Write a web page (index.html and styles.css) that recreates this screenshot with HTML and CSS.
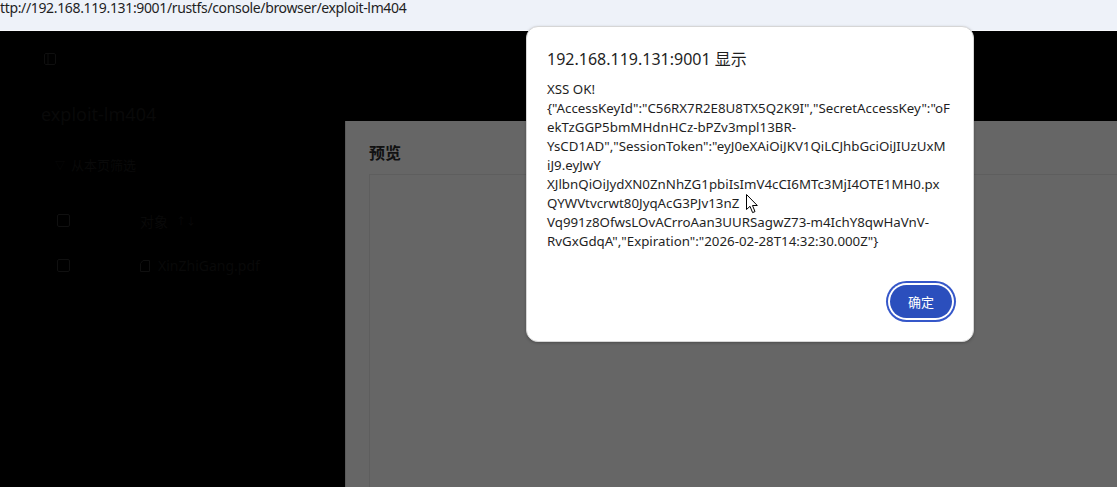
FILE: index.html
```html
<!DOCTYPE html>
<html lang="zh-CN">
<head>
<meta charset="utf-8">
<title>exploit-lm404</title>
<link rel="stylesheet" href="styles.css">
</head>
<body>
<div class="urlbar">ttp://192.168.119.131:9001/rustfs/console/browser/exploit-lm404</div>
<div class="page">
  <div class="side">
    <svg class="side-icon" width="12" height="12" viewBox="0 0 12 12"><rect x="0.5" y="0.5" width="11" height="11" rx="1.5" fill="none" stroke="#0f0f0f"/><line x1="4" y1="1" x2="4" y2="11" stroke="#0f0f0f"/></svg>
    <div class="bucket">exploit-lm404</div>
    <div class="filter"><span class="funnel">▽</span>从本页筛选</div>
    <div class="row head"><span class="cb"></span><span class="name">对象 <span class="sort">↑↓</span></span></div>
    <div class="row"><span class="cb"></span><span class="name"><svg width="10" height="12" viewBox="0 0 10 12"><path d="M3 0.5h6.5v11h-9v-8z" fill="none" stroke="#0f0f0f"/></svg>XinZhiGang.pdf</span></div>
  </div>
  <div class="main">
    <div class="preview">
      <div class="preview-title">预览</div>
      <div class="preview-box"></div>
    </div>
  </div>
</div>

<div class="dialog">
  <div class="dialog-title">192.168.119.131:9001 显示</div>
  <div class="dialog-body">
    <div>XSS OK!</div>
    <div>{"AccessKeyId":"C56RX7R2E8U8TX5Q2K9I","SecretAccessKey":"oF</div>
    <div>ekTzGGP5bmMHdnHCz-bPZv3mpl13BR-</div>
    <div>YsCD1AD","SessionToken":"eyJ0eXAiOiJKV1QiLCJhbGciOiJIUzUxM</div>
    <div>iJ9.eyJwY</div>
    <div>XJlbnQiOiJydXN0ZnNhZG1pbiIsImV4cCI6MTc3MjI4OTE1MH0.px</div>
    <div>QYWVtvcrwt80JyqAcG3PJv13nZ</div>
    <div>Vq991z8OfwsLOvACrroAan3UURSagwZ73-m4IchY8qwHaVnV-</div>
    <div>RvGxGdqA","Expiration":"2026-02-28T14:32:30.000Z"}</div>
  </div>
  <div class="dialog-actions"><button class="ok">确定</button></div>
</div>

<svg class="cursor" width="13" height="20" viewBox="0 0 13 20"><path d="M0.5 0.5 L0.5 15.5 L4 12.3 L6.6 18.6 L9 17.6 L6.5 11.5 L11.3 11.5 Z" fill="#fff" stroke="#000" stroke-width="1" stroke-linejoin="round"/></svg>
</body>
</html>
```
FILE: styles.css
```css
* { box-sizing: border-box; }
html, body { margin: 0; padding: 0; }
body {
  width: 1117px;
  height: 487px;
  overflow: hidden;
  background: #000;
  font-family: "Noto Sans", "Noto Sans CJK SC", sans-serif;
}
.urlbar {
  height: 31px;
  background: #eef2f9;
  border-bottom: 1px solid #f8f9fc;
  color: #1f1f1f;
  font-size: 14px;
  line-height: 16px;
  white-space: nowrap;
  letter-spacing: -0.35px;
}
.page {
  display: flex;
  height: 456px;
  background: #000;
}
.side {
  width: 345px;
  flex: none;
  color: #090909;
  display: flex;
  flex-direction: column;
}
.side-icon { margin: 22px 0 0 44px; display: block; }
.bucket {
  margin: 38px 0 0 41px;
  font-size: 18px;
  line-height: 22px;
}
.filter {
  margin: 31px 0 0 55px;
  font-size: 13px;
  line-height: 18px;
  display: flex;
  gap: 6px;
  align-items: center;
}
.funnel { font-size: 10px; }
.row {
  display: flex;
  align-items: center;
  margin-left: 57px;
  height: 45px;
}
.row.head { margin-top: 24px; }
.cb {
  width: 13px;
  height: 13px;
  border: 1px solid #101010;
  border-radius: 2px;
}
.name {
  margin-left: 70px;
  font-size: 14px;
  display: flex;
  align-items: center;
  gap: 8px;
}
.sort { font-size: 10px; }
.main {
  flex: 1;
  padding-top: 90px;
  display: flex;
}
.preview {
  flex: 1;
  background: #666;
  border-left: 1px solid #5a5a5a;
  padding: 20px 0 0 23px;
  display: flex;
  flex-direction: column;
}
.preview-title {
  color: #111;
  font-weight: 700;
  font-size: 16px;
  line-height: 22px;
  font-family: "Noto Sans CJK SC", sans-serif;
}
.preview-box {
  flex: 1;
  margin-top: 11px;
  border-top: 1px solid #5e5e5e;
  border-left: 1px solid #5e5e5e;
}
.dialog {
  position: absolute;
  left: 526px;
  top: 26px;
  width: 448px;
  height: 316px;
  background: #fff;
  border: 1px solid #d6d6d6;
  border-radius: 12px;
  box-shadow: 0 1px 3px rgba(0,0,0,0.25);
  padding: 20px 17px 0 20px;
  display: flex;
  flex-direction: column;
  color: #1f1f1f;
}
.dialog-title {
  font-size: 16px;
  line-height: 24px;
  white-space: nowrap;
}
.dialog-body {
  margin-top: 9px;
  font-size: 13.3px;
  line-height: 19px;
  white-space: nowrap;
}
.dialog-actions {
  margin-top: auto;
  margin-bottom: 19px;
  display: flex;
  justify-content: flex-end;
}
.ok {
  width: 62px;
  height: 33px;
  margin: 4px;
  border: none;
  border-radius: 999px;
  background: #2b4fbd;
  color: #fff;
  font-size: 13px;
  font-family: "Noto Sans CJK SC", sans-serif;
  box-shadow: 0 0 0 2px #fff, 0 0 0 4px #3557c9;
  padding: 0;
}
.cursor {
  position: absolute;
  left: 746px;
  top: 194px;
}
```
